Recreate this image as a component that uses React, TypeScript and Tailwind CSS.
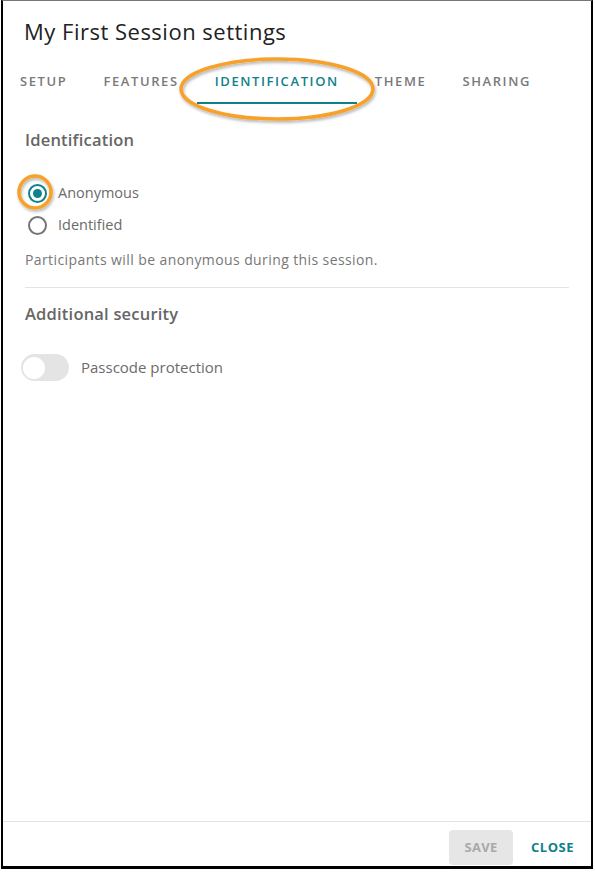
import React from "react";

const font = { fontFamily: "'Open Sans', Lato, sans-serif" };

function Radio({ checked, label }: { checked: boolean; label: string }) {
  return (
    <div className="flex items-center h-[32px]">
      <div className="w-[24px] flex justify-center">
        <div
          className={
            "w-[19px] h-[19px] rounded-full border-2 flex items-center justify-center " +
            (checked ? "border-[#0f8189]" : "border-[#757575]")
          }
        >
          {checked && <div className="w-[9px] h-[9px] rounded-full bg-[#0f8189]" />}
        </div>
      </div>
      <span className="ml-[9px] text-[14.5px] text-[#6b6b6b]">{label}</span>
    </div>
  );
}

export default function App() {
  const tabs = ["SETUP", "FEATURES", "IDENTIFICATION", "THEME", "SHARING"];
  return (
    <div className="w-[595px] h-[873px] bg-white relative" style={font}>
      <div className="ml-[1px] w-[592px] h-[869px] border-l-2 border-r-2 border-b-[3px] border-t border-black border-t-[#777] flex flex-col">
        <div className="pl-[21px] pt-[16px] text-[22px] tracking-[0.5px] text-[#222] leading-[28px]">
          My First Session settings
        </div>
        <div className="flex -ml-[1px] mt-[27px] h-[32px]">
          {tabs.map((t) => {
            const active = t === "IDENTIFICATION";
            return (
              <div
                key={t}
                className={
                  "px-[18px] flex items-start text-[13px] font-semibold tracking-[1.6px] border-b-2 leading-[18px] " +
                  (active ? "text-[#0f8189] border-[#0f8189]" : "text-[#7a7a7a] border-transparent")
                }
              >
                {t}
              </div>
            );
          })}
        </div>
        <div className="flex-1 px-[22px]">
          <div className="mt-[24px] text-[16.5px] tracking-[0.2px] font-semibold text-[#666] leading-[24px]">Identification</div>
          <div className="mt-[25px]">
            <Radio checked label="Anonymous" />
            <Radio checked={false} label="Identified" />
          </div>
          <div className="mt-[9px] text-[14px] tracking-[0.4px] text-[#777] leading-[20px]">
            Participants will be anonymous during this session.
          </div>
          <div className="mt-[17px] border-t border-[#e3e3e3]" />
          <div className="mt-[14px] text-[16.5px] tracking-[0.2px] font-semibold text-[#666] leading-[24px]">Additional security</div>
          <div className="mt-[28px] flex items-center -ml-[4px]">
            <div className="w-[48px] h-[27px] rounded-full bg-[#e4e4e4] flex items-center pl-[2px]">
              <div className="w-[22px] h-[22px] rounded-full bg-white" />
            </div>
            <span className="ml-[12px] text-[15px] text-[#6b6b6b]">Passcode protection</span>
          </div>
        </div>
        <div className="border-t border-[#e3e3e3] h-[45px] flex items-start pt-[8px] justify-end pr-[17px] gap-[18px]">
          <div className="w-[64px] h-[35px] rounded-[4px] bg-[#e6e6e6] text-[#a9a9a9] text-[13px] tracking-[0.3px] font-bold flex items-center justify-center">
            SAVE
          </div>
          <div className="h-[35px] flex items-center text-[13px] tracking-[0.5px] font-bold text-[#0f8189]">CLOSE</div>
        </div>
      </div>
      <svg className="absolute left-0 top-0 pointer-events-none" width="595" height="873">
        <defs>
          <filter id="sh" x="-20%" y="-20%" width="140%" height="140%">
            <feDropShadow dx="1" dy="2" stdDeviation="1.5" floodColor="#000" floodOpacity="0.3" />
          </filter>
        </defs>
        <ellipse cx="277" cy="89" rx="96" ry="30" fill="none" stroke="#f7a12b" strokeWidth="3.5" filter="url(#sh)" />
        <circle cx="35" cy="192" r="16" fill="none" stroke="#f7a12b" strokeWidth="3.5" filter="url(#sh)" />
      </svg>
    </div>
  );
}
